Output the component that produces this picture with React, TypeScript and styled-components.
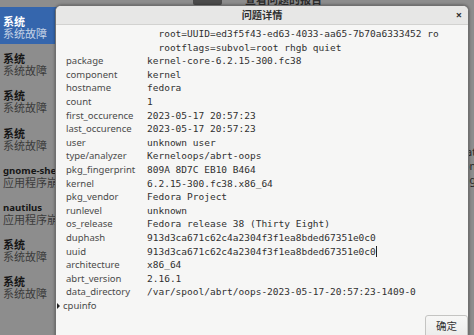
import React from 'react'
import styled, { createGlobalStyle } from 'styled-components'

const GlobalStyle = createGlobalStyle`
  html, body {
    margin: 0;
    padding: 0;
  }
  body {
    width: 474px;
    height: 335px;
    overflow: hidden;
    background: #8d8d8d;
    font-family: "Noto Sans", "Noto Sans CJK SC", sans-serif;
  }
`

const sidebarItems = [
  { title: '系统', sub: '系统故障', selected: true },
  { title: '系统', sub: '系统故障' },
  { title: '系统', sub: '系统故障' },
  { title: '系统', sub: '系统故障' },
  { title: 'gnome-shell', sub: '应用程序崩溃', latin: true },
  { title: 'nautilus', sub: '应用程序崩溃', latin: true },
  { title: '系统', sub: '系统故障' },
  { title: '系统', sub: '系统故障' },
]

const details: [string, string][] = [
  ['', '  root=UUID=ed3f5f43-ed63-4033-aa65-7b70a6333452 ro'],
  ['', '  rootflags=subvol=root rhgb quiet'],
  ['package', 'kernel-core-6.2.15-300.fc38'],
  ['component', 'kernel'],
  ['hostname', 'fedora'],
  ['count', '1'],
  ['first_occurence', '2023-05-17 20:57:23'],
  ['last_occurence', '2023-05-17 20:57:23'],
  ['user', 'unknown user'],
  ['type/analyzer', 'Kerneloops/abrt-oops'],
  ['pkg_fingerprint', '809A 8D7C EB10 B464'],
  ['kernel', '6.2.15-300.fc38.x86_64'],
  ['pkg_vendor', 'Fedora Project'],
  ['runlevel', 'unknown'],
  ['os_release', 'Fedora release 38 (Thirty Eight)'],
  ['duphash', '913d3ca671c62c4a2304f3f1ea8bded67351e0c0'],
  ['uuid', '913d3ca671c62c4a2304f3f1ea8bded67351e0c0'],
  ['architecture', 'x86_64'],
  ['abrt_version', '2.16.1'],
  ['data_directory', '/var/spool/abrt/oops-2023-05-17-20:57:23-1409-0'],
]

export default function App() {
  return (
    <>
      <GlobalStyle />
      <Window>
        <TopBar>
          <TopIcon />
          <TopTitle>查看问题的报告</TopTitle>
        </TopBar>
        <Body>
          <Sidebar>
            {sidebarItems.map((item, i) => (
              <SideItem key={i} $selected={!!item.selected}>
                <SideTitle $latin={!!item.latin}>{item.title}</SideTitle>
                <SideSub>{item.sub}</SideSub>
              </SideItem>
            ))}
          </Sidebar>
          <Main>
            <MainLine>kernel: BUG: unable to handle page fault at</MainLine>
            <MainLine>RIP: 0010:__do_sys_function</MainLine>
            <MainLine>Call Trace: do_syscall_64 page_logging</MainLine>
          </Main>
        </Body>
      </Window>

      <Dialog>
        <DialogHeader>
          <span />
          <DialogTitle>问题详情</DialogTitle>
          <CloseButton>×</CloseButton>
        </DialogHeader>
        <DetailList>
          {details.map(([key, value], i) => (
            <DetailRow key={i}>
              <Key>{key}</Key>
              <Value>
                {value}
                {key === 'uuid' && <Caret />}
              </Value>
            </DetailRow>
          ))}
          <ExpanderRow>
            <Triangle />
            <Key>cpuinfo</Key>
          </ExpanderRow>
        </DetailList>
        <Footer>
          <OkButton>确定</OkButton>
        </Footer>
      </Dialog>
    </>
  )
}

const Window = styled.div`
  width: 474px;
  height: 335px;
  display: flex;
  flex-direction: column;
  background: #8d8d8d;
`

const TopBar = styled.div`
  height: 5px;
  display: flex;
  align-items: flex-end;
  gap: 23px;
  padding-left: 193px;
  overflow: hidden;
`

const TopIcon = styled.div`
  width: 29px;
  height: 20px;
  background: #4b4b4b;
  border-radius: 2px;
  flex: none;
`

const TopTitle = styled.div`
  font-size: 11px;
  line-height: 11px;
  font-weight: 700;
  color: #2c2c2c;
  white-space: nowrap;
`

const Body = styled.div`
  flex: 1;
  display: grid;
  grid-template-columns: 150px 1fr;
  min-height: 0;
`

const Sidebar = styled.div`
  display: flex;
  flex-direction: column;
  padding-top: 2px;
  overflow: hidden;
`

const SideItem = styled.div<{ $selected: boolean }>`
  height: 37.2px;
  box-sizing: border-box;
  padding: 9px 0 0 3px;
  background: ${(p) => (p.$selected ? '#3566ad' : 'transparent')};
  color: ${(p) => (p.$selected ? '#ffffff' : '#161616')};
  flex: none;
`

const SideTitle = styled.div<{ $latin: boolean }>`
  font-size: ${(p) => (p.$latin ? '9.6px' : '11px')};
  line-height: 12px;
  height: 12px;
  font-weight: 700;
  white-space: nowrap;
`

const SideSub = styled.div`
  font-size: 11px;
  line-height: 12px;
  height: 12px;
  white-space: nowrap;
  opacity: 0.7;
`

const Main = styled.div`
  padding-top: 140px;
  display: flex;
  flex-direction: column;
  align-items: flex-end;
  overflow: hidden;
  margin-right: -2px;
`

const MainLine = styled.div`
  font-size: 10.5px;
  line-height: 14px;
  color: #262626;
  white-space: nowrap;
`

const Dialog = styled.div`
  position: absolute;
  left: 55px;
  top: 5px;
  width: 414px;
  height: 345px;
  box-sizing: border-box;
  display: flex;
  flex-direction: column;
  background: #f6f6f5;
  border: 1px solid #707070;
  border-radius: 6px 6px 0 0;
  box-shadow: 0 0 3px rgba(0, 0, 0, 0.45);
  overflow: hidden;
`

const DialogHeader = styled.div`
  height: 18px;
  flex: none;
  display: grid;
  grid-template-columns: 1fr auto 1fr;
  align-items: center;
  background: #e7e7e6;
  border-bottom: 1px solid #d2d2d0;
`

const DialogTitle = styled.div`
  font-size: 10.2px;
  font-weight: 700;
  color: #2f2f2f;
  line-height: 18px;
`

const CloseButton = styled.div`
  justify-self: end;
  padding-right: 6px;
  font-size: 11px;
  font-weight: 700;
  color: #333;
  line-height: 18px;
`

const DetailList = styled.div`
  flex: none;
  padding-top: 2px;
  display: flex;
  flex-direction: column;
`

const DetailRow = styled.div`
  display: grid;
  grid-template-columns: 81px 1fr;
  padding-left: 10px;
  height: 13.6px;
  line-height: 13.6px;
  align-items: center;
`

const Key = styled.div`
  font-size: 9.5px;
  color: #4a4a4a;
  white-space: nowrap;
  line-height: 13.6px;
`

const Value = styled.div`
  font-family: "DejaVu Sans Mono", "Liberation Mono", monospace;
  font-size: 9.5px;
  color: #303030;
  white-space: pre;
  line-height: 13.6px;
  display: flex;
  align-items: center;
`

const Caret = styled.span`
  display: inline-block;
  width: 1px;
  height: 11px;
  background: #222;
`

const ExpanderRow = styled.div`
  display: flex;
  align-items: center;
  gap: 3px;
  padding-left: 1px;
  height: 13.6px;
`

const Triangle = styled.span`
  width: 0;
  height: 0;
  border-top: 3px solid transparent;
  border-bottom: 3px solid transparent;
  border-left: 3px solid #222;
`

const Footer = styled.div`
  display: flex;
  justify-content: flex-end;
  padding: 3px 0 0 0;
`

const OkButton = styled.button`
  width: 43px;
  height: 24px;
  padding: 0 0 3px;
  font-family: "Noto Sans CJK SC", sans-serif;
  font-size: 10.5px;
  color: #333;
  background: linear-gradient(#f7f7f6, #ebebea);
  border: 1px solid #c4c4c2;
  border-radius: 3px;
`
